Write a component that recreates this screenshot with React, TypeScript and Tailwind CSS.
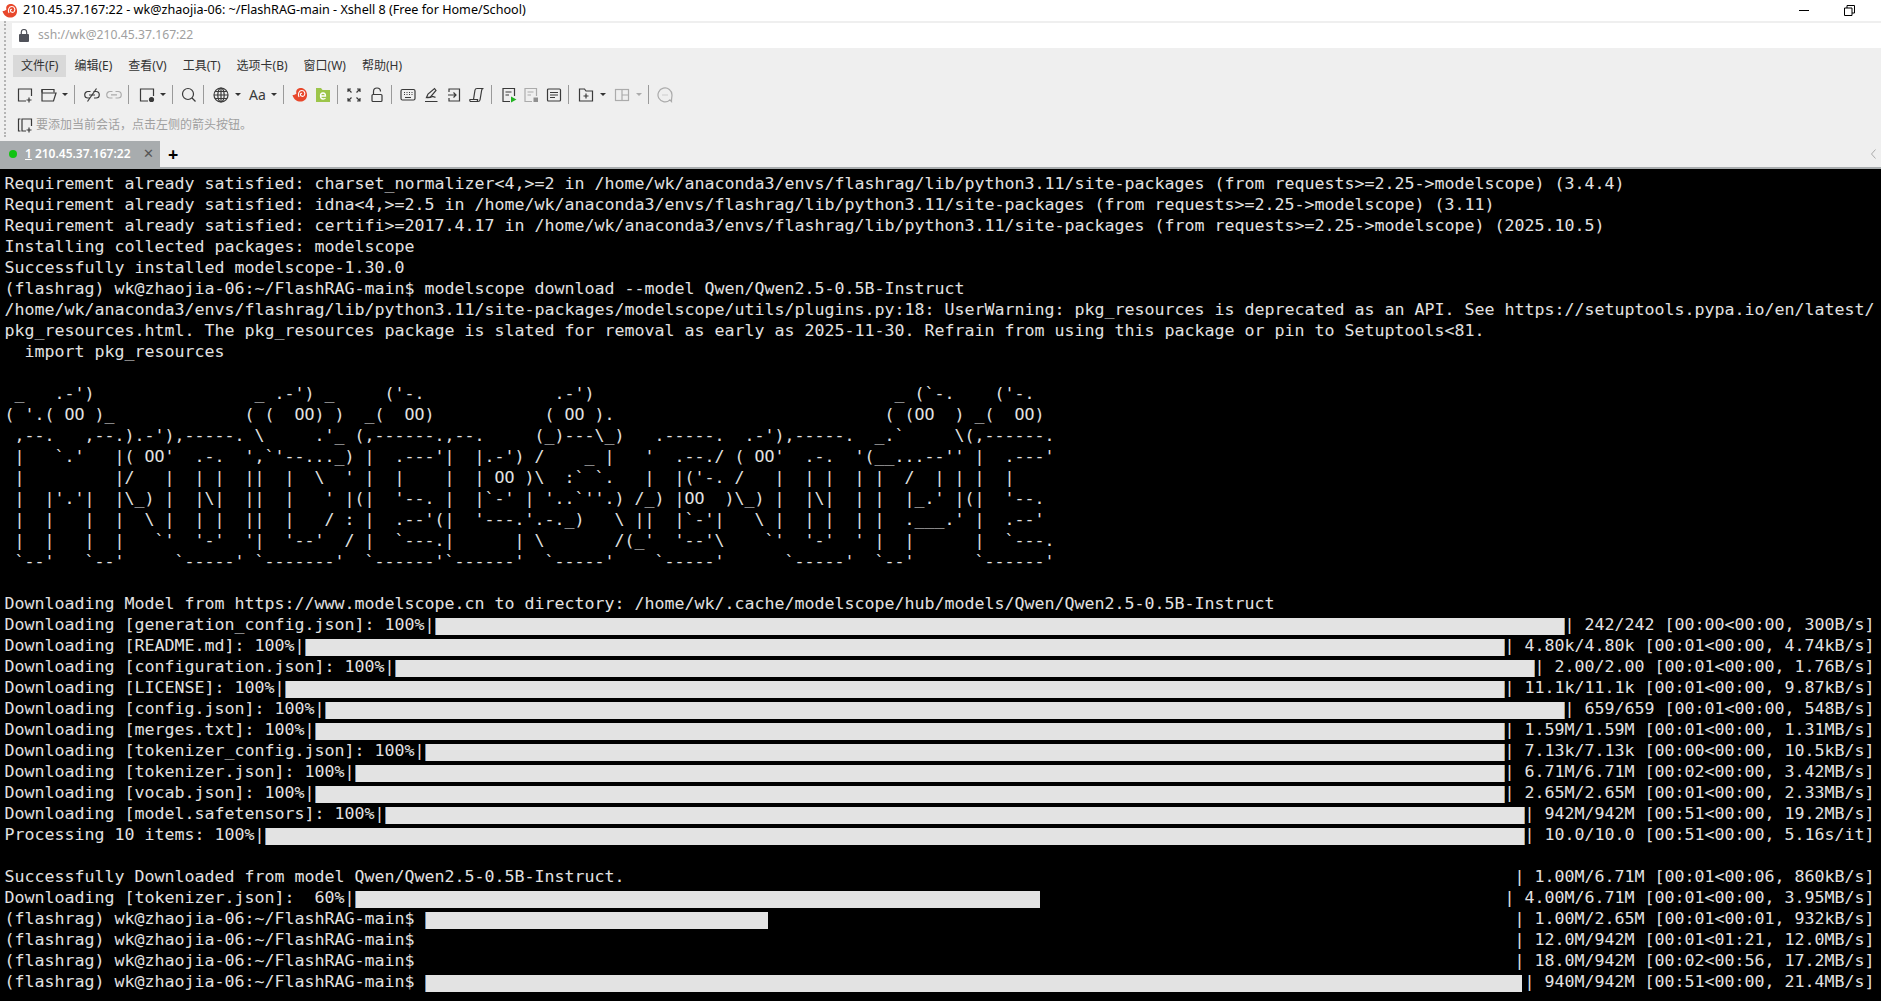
import type { ReactNode } from "react";

const TERMINAL_FONT = "font-['DejaVu_Sans_Mono',monospace]";
const UI_FONT = "font-['Noto_Sans','Noto_Sans_CJK_SC',sans-serif]";
const PROMPT = "(flashrag) wk@zhaojia-06:~/FlashRAG-main$ ";

const HEAD_LINES = [
  "Requirement already satisfied: charset_normalizer<4,>=2 in /home/wk/anaconda3/envs/flashrag/lib/python3.11/site-packages (from requests>=2.25->modelscope) (3.4.4)",
  "Requirement already satisfied: idna<4,>=2.5 in /home/wk/anaconda3/envs/flashrag/lib/python3.11/site-packages (from requests>=2.25->modelscope) (3.11)",
  "Requirement already satisfied: certifi>=2017.4.17 in /home/wk/anaconda3/envs/flashrag/lib/python3.11/site-packages (from requests>=2.25->modelscope) (2025.10.5)",
  "Installing collected packages: modelscope",
  "Successfully installed modelscope-1.30.0",
  PROMPT + "modelscope download --model Qwen/Qwen2.5-0.5B-Instruct",
  "/home/wk/anaconda3/envs/flashrag/lib/python3.11/site-packages/modelscope/utils/plugins.py:18: UserWarning: pkg_resources is deprecated as an API. See https://setuptools.pypa.io/en/latest/",
  "pkg_resources.html. The pkg_resources package is slated for removal as early as 2025-11-30. Refrain from using this package or pin to Setuptools<81.",
  "  import pkg_resources",
  "",
  " _   .-')                _ .-') _     ('-.             .-')                              _ (`-.    ('-.",
  "( '.( OO )_             ( (  OO) )  _(  OO)           ( OO ).                           ( (OO  ) _(  OO)",
  " ,--.   ,--.).-'),-----. \\     .'_ (,------.,--.     (_)---\\_)   .-----.  .-'),-----.  _.`     \\(,------.",
  " |   `.'   |( OO'  .-.  ',`'--..._) |  .---'|  |.-') /    _ |   '  .--./ ( OO'  .-.  '(__...--'' |  .---'",
  " |         |/   |  | |  ||  |  \\  ' |  |    |  | OO )\\  :` `.   |  |('-. /   |  | |  | |  /  | | |  |",
  " |  |'.'|  |\\_) |  |\\|  ||  |   ' |(|  '--. |  |`-' | '..`''.) /_) |OO  )\\_) |  |\\|  | |  |_.' |(|  '--.",
  " |  |   |  |  \\ |  | |  ||  |   / : |  .--'(|  '---.'.-._)   \\ ||  |`-'|   \\ |  | |  | |  .___.' |  .--'",
  " |  |   |  |   `'  '-'  '|  '--'  / |  `---.|      | \\       /(_'  '--'\\    `'  '-'  ' |  |      |  `---.",
  " `--'   `--'     `-----' `-------'  `------'`------'  `-----'    `-----'      `-----'  `--'      `------'",
  "",
  "Downloading Model from https://www.modelscope.cn to directory: /home/wk/.cache/modelscope/hub/models/Qwen/Qwen2.5-0.5B-Instruct",
];

// prefix, suffix, and the filled bar width in character cells (undefined = fills the whole gap)
const BAR_ROWS: { prefix: string; suffix: string; fill?: number }[] = [
  { prefix: "Downloading [generation_config.json]: 100%|", suffix: "| 242/242 [00:00<00:00, 300B/s]" },
  { prefix: "Downloading [README.md]: 100%|", suffix: "| 4.80k/4.80k [00:01<00:00, 4.74kB/s]" },
  { prefix: "Downloading [configuration.json]: 100%|", suffix: "| 2.00/2.00 [00:01<00:00, 1.76B/s]" },
  { prefix: "Downloading [LICENSE]: 100%|", suffix: "| 11.1k/11.1k [00:01<00:00, 9.87kB/s]" },
  { prefix: "Downloading [config.json]: 100%|", suffix: "| 659/659 [00:01<00:00, 548B/s]" },
  { prefix: "Downloading [merges.txt]: 100%|", suffix: "| 1.59M/1.59M [00:01<00:00, 1.31MB/s]" },
  { prefix: "Downloading [tokenizer_config.json]: 100%|", suffix: "| 7.13k/7.13k [00:00<00:00, 10.5kB/s]" },
  { prefix: "Downloading [tokenizer.json]: 100%|", suffix: "| 6.71M/6.71M [00:02<00:00, 3.42MB/s]" },
  { prefix: "Downloading [vocab.json]: 100%|", suffix: "| 2.65M/2.65M [00:01<00:00, 2.33MB/s]" },
  { prefix: "Downloading [model.safetensors]: 100%|", suffix: "| 942M/942M [00:51<00:00, 19.2MB/s]" },
  { prefix: "Processing 10 items: 100%|", suffix: "| 10.0/10.0 [00:51<00:00, 5.16s/it]" },
  { prefix: "", suffix: "", fill: 0 },
  { prefix: "Successfully Downloaded from model Qwen/Qwen2.5-0.5B-Instruct.", suffix: "| 1.00M/6.71M [00:01<00:06, 860kB/s]", fill: 0 },
  { prefix: "Downloading [tokenizer.json]:  60%|", suffix: "| 4.00M/6.71M [00:01<00:00, 3.95MB/s]", fill: 68.5 },
  { prefix: PROMPT, suffix: "| 1.00M/2.65M [00:01<00:01, 932kB/s]", fill: 34.3 },
  { prefix: PROMPT, suffix: "| 12.0M/942M [00:01<01:21, 12.0MB/s]", fill: 0 },
  { prefix: PROMPT, suffix: "| 18.0M/942M [00:02<00:56, 17.2MB/s]", fill: 0 },
  { prefix: PROMPT, suffix: "| 940M/942M [00:51<00:00, 21.4MB/s]", fill: 109.7 },
];

const MENUS = ["文件(F)", "编辑(E)", "查看(V)", "工具(T)", "选项卡(B)", "窗口(W)", "帮助(H)"];

function Ic({ className = "", muted = false, children }: { className?: string; muted?: boolean; children: ReactNode }) {
  return (
    <svg
      viewBox="0 0 16 16"
      fill="none"
      stroke={muted ? "#ababab" : "#3a3a3a"}
      strokeWidth="1.2"
      className={`w-4 h-4 shrink-0 ${className}`}
    >
      {children}
    </svg>
  );
}

function Sep({ className }: { className: string }) {
  return <div className={`w-px h-[19px] bg-[#9a9a9a] shrink-0 ${className}`} />;
}

function Caret({ className, muted = false }: { className: string; muted?: boolean }) {
  return (
    <div
      className={`w-0 h-0 shrink-0 border-x-[3px] border-x-transparent border-t-[3px] ${
        muted ? "border-t-[#ababab]" : "border-t-[#333333]"
      } ${className}`}
    />
  );
}

function SnailLogo({ className = "" }: { className?: string }) {
  return (
    <svg viewBox="0 0 16 16" className={`w-4 h-4 shrink-0 ${className}`} fill="none">
      <path d="M0.5 8C2 13.5 6 15 9.5 14.5C13.5 14 15.5 10.5 15 7C14.5 3 11.5 0.5 8 1C5 1.5 3.5 4 4.5 6.5C3 7.5 2 8 0.5 8Z" fill="#e8482c" />
      <path d="M7 10C5.5 7 7 3.5 9.8 3.5C12.5 3.5 13.5 6.4 12.4 8.2C11.2 10 8.6 9.6 8.4 7.6C8.3 6.6 9.2 6 10 6.5" stroke="#ffffff" strokeWidth="1.1" />
    </svg>
  );
}

function TerminalRow({ children }: { children?: ReactNode }) {
  return <div className="flex h-[21px] leading-[22px] whitespace-pre">{children}</div>;
}

function BarRow({ prefix, suffix, fill }: { prefix: string; suffix: string; fill?: number }) {
  const full = fill === undefined;
  return (
    <TerminalRow>
      <span className="shrink-0">{prefix}</span>
      <div className="flex-1 min-w-0 flex items-end">
        {full ? (
          <div className="w-full h-[17px] bg-[#e3e3e3] border-l border-l-[#5f8fc0] border-r border-r-[#c09a66]" />
        ) : fill ? (
          <div className="h-[17px] bg-[#e3e3e3] border-l border-l-[#5f8fc0]" style={{ width: fill * 10 }} />
        ) : null}
      </div>
      <span className="shrink-0">{suffix}</span>
    </TerminalRow>
  );
}

function Toolbar() {
  return (
    <div className="flex items-center h-[19px] mt-2">
      <Ic className="ml-[5px]">
        <path d="M9 14H1.5V2H14.5V9" />
        <path d="M12 10.5v5M9.5 13h5" />
      </Ic>
      <Ic className="ml-2">
        <path d="M1 5.5V2.5H13V5.5" />
        <path d="M1 2.5V14H12.5L15 6H1" />
      </Ic>
      <Caret className="ml-[5px]" />
      <Sep className="ml-[6px]" />
      <Ic className="ml-[9px]">
        <path d="M6.5 4.5H4a3 3 0 0 0 0 6.5h2M9.5 4.5H12a3 3 0 0 1 0 6.5h-2M5 8h6" />
        <path d="M3.5 14.5L12.5 1.5" />
      </Ic>
      <Ic muted className="ml-[6px]">
        <path d="M6.5 4.5H4a3.2 3.2 0 0 0 0 6.5h2.5M9.5 4.5H12a3.2 3.2 0 0 1 0 6.5H9.5M5 7.8h6" />
      </Ic>
      <Sep className="ml-[6px]" />
      <Ic className="ml-[10px]">
        <path d="M9 14H1.5V2H14.5V9" />
        <circle cx="12.5" cy="12.5" r="2" fill="#3a3a3a" />
      </Ic>
      <Caret className="ml-[5px]" />
      <Sep className="ml-[6px]" />
      <Ic className="ml-2">
        <circle cx="7" cy="7" r="5.5" />
        <path d="M11 11l3.5 3.5" />
      </Ic>
      <Sep className="ml-[6px]" />
      <Ic className="ml-[9px]">
        <circle cx="8" cy="8" r="7" />
        <ellipse cx="8" cy="8" rx="3.2" ry="7" />
        <path d="M1 8h14M2 4.5h12M2 11.5h12M8 1v14" />
      </Ic>
      <Caret className="ml-[6px]" />
      <span className="ml-2 w-4 shrink-0 text-[14px] leading-[19px] text-[#3a3a3a]">Aa</span>
      <Caret className="ml-[6px]" />
      <Sep className="ml-[6px]" />
      <SnailLogo className="ml-2" />
      <svg viewBox="0 0 16 16" className="w-4 h-4 shrink-0 ml-[7px]" fill="none">
        <path d="M1 1h5l1.5 2H15v12H1z" fill="#9cc54a" />
        <path d="M5.5 9h5C10.5 7 9.5 6 8 6S5.5 7.2 5.5 9s1 3 2.7 3c1 0 1.7-.3 2.3-.9" stroke="#ffffff" strokeWidth="1.3" />
      </svg>
      <Sep className="ml-[6px]" />
      <Ic className="ml-2">
        <path d="M2 5V2h3M14 5V2h-3M2 11v3h3M14 11v3h-3M2.5 2.5l3 3M13.5 2.5l-3 3M2.5 13.5l3-3M13.5 13.5l-3-3" />
      </Ic>
      <Ic className="ml-[7px]">
        <rect x="3" y="7.5" width="10" height="7" rx="1" />
        <path d="M4.5 7.5V4.5a3.5 3.5 0 0 1 7 0" />
      </Ic>
      <Sep className="ml-[6px]" />
      <Ic className="ml-2">
        <rect x="1" y="2.5" width="14" height="10.5" rx="1.5" />
        <path d="M4 5.5h1M6.5 5.5h1M9 5.5h1M11.5 5.5h1M4 7.5h1M6.5 7.5h1M9 7.5h1M11.5 7.5h1M5 10.5h6" />
      </Ic>
      <Ic className="ml-[7px]">
        <path d="M3.5 10.5L5 7l6.5-5.5 1.5 2L7.5 10z" />
        <path d="M3.5 10.5c2 .5 4 0 6-1l3 .8M2 14.5h12.5" />
      </Ic>
      <Ic className="ml-[7px]">
        <path d="M3 5V2h10.5v12H3v-3" />
        <path d="M2 8h8M7.5 5.5L10 8l-2.5 2.5" />
      </Ic>
      <Ic className="ml-[7px]">
        <path d="M4.5 12.5L6 3c.2-1 1-1.5 2-1.5h6.5c-1 0-1.6.7-1.8 1.5L11 13c-.2 1-1 1.5-2 1.5H2c-1 0-1.5-.8-1-2h7.5c-.3.8 0 1.8.8 2" />
      </Ic>
      <Sep className="ml-[6px]" />
      <svg viewBox="0 0 16 16" className="w-4 h-4 shrink-0 ml-[9px]" fill="none" stroke="#3a3a3a" strokeWidth="1.2">
        <path d="M9 14.5H2V1.5h11.5V9M4.5 5h6M4.5 8h3.5" />
        <path d="M10 9.5v6l5.5-3z" fill="#22b322" stroke="none" />
      </svg>
      <svg viewBox="0 0 16 16" className="w-4 h-4 shrink-0 ml-[6px]" fill="none" stroke="#ababab" strokeWidth="1.2">
        <path d="M9 14.5H2V1.5h11.5V9M4.5 5h6M4.5 8h3.5" />
        <rect x="10.5" y="10.5" width="4.5" height="4.5" fill="#8f8f8f" stroke="none" />
      </svg>
      <Ic className="ml-[7px]">
        <rect x="1.5" y="2" width="13" height="12" rx="1" />
        <path d="M4 5.5h8M4 8h8M4 10.5h5" />
      </Ic>
      <Sep className="ml-[6px]" />
      <Ic className="ml-[9px]">
        <path d="M1.5 14V2h5l1.5 2h6.5v10z" />
        <path d="M8 6.5v5M5.5 9h5" />
      </Ic>
      <Caret className="ml-[6px]" />
      <Ic muted className="ml-2">
        <rect x="1.5" y="2.5" width="13" height="11" />
        <path d="M8 2.5v11M8 8h6.5" />
      </Ic>
      <Caret muted className="ml-[6px]" />
      <Sep className="ml-[6px]" />
      <Ic muted className="ml-2">
        <path d="M14.5 14.5l-1.6-1.6A7 7 0 1 1 15 8c0 2-.6 3.5-.5 6.5z" />
        <path d="M5.5 8h1M7.5 8h1M9.5 8h1" />
      </Ic>
    </div>
  );
}

export default function App() {
  return (
    <div className={`w-[1881px] h-[1001px] overflow-hidden flex flex-col bg-black ${UI_FONT}`}>
      {/* Title bar */}
      <div className="h-[21px] bg-white flex items-center pl-[2px] shrink-0">
        <SnailLogo />
        <span className="ml-[5px] text-[12.6px] text-black whitespace-pre">
          210.45.37.167:22 - wk@zhaojia-06: ~/FlashRAG-main - Xshell 8 (Free for Home/School)
        </span>
        <div className="ml-auto flex items-center">
          <div className="w-[10px] h-px bg-black" />
          <svg viewBox="0 0 11 11" className="ml-[35px] mr-[26px] w-[11px] h-[11px]" fill="none" stroke="#000000">
            <path d="M.5 3h7.5v7.5H.5zM3 3V.5h7.5V8H8" />
          </svg>
        </div>
      </div>

      {/* Address, menu, toolbar and hint */}
      <div className="h-[120px] bg-[#efefef] flex shrink-0">
        <div className="w-3 pl-1 pb-1 shrink-0">
          <div className="h-full border-l-2 border-dotted border-[#b5b5b5]" />
        </div>
        <div className="flex-1 min-w-0 pt-[2px]">
          <div className="h-[25px] bg-white flex items-center pl-[7px] text-[12.2px] text-[#a0a0a0]">
            <svg viewBox="0 0 10 13" className="w-[10px] h-[13px]" fill="none">
              <rect y="5" width="10" height="8" rx="1" fill="#50525a" />
              <path d="M2.3 5.5V3.2a2.7 2.7 0 0 1 5.4 0v2.3" stroke="#50525a" strokeWidth="1.2" />
            </svg>
            <span className="ml-[9px]">ssh://wk@210.45.37.167:22</span>
          </div>
          <div className="flex h-[22px] mt-[7px] ml-px text-[12px] text-[#333333]">
            {MENUS.map((m, i) => (
              <div key={m} className={`px-2 flex items-center ${i === 0 ? "bg-[#d9d9d9]" : ""}`}>
                {m}
              </div>
            ))}
          </div>
          <Toolbar />
          <div className="flex items-center h-4 mt-[13px] ml-[5px] text-[12px] text-[#a0a0a0]">
            <Ic>
              <path d="M3.5 2H1.5V14H3.5M9 14H5V2H14.5V9" />
              <path d="M12 10.5v5M9.5 13h5" />
            </Ic>
            <span className="ml-[3px]">要添加当前会话，点击左侧的箭头按钮。</span>
          </div>
        </div>
      </div>

      {/* Tabs */}
      <div className="h-[26px] bg-[#efefef] flex items-center shrink-0">
        <div className="w-[160px] h-full bg-[#a8acae] flex items-center pl-[9px] text-[12px] font-semibold text-white">
          <span className="w-2 h-2 rounded-full bg-[#12c312]" />
          <span className="ml-2 underline">1</span>
          <span className="ml-[3px]">210.45.37.167:22</span>
          <span className="ml-3 text-[#555555] font-normal text-[13px]">✕</span>
        </div>
        <span className="ml-2 text-[18px] font-bold text-black leading-none">+</span>
        <svg viewBox="0 0 5 10" className="ml-auto mr-[5px] w-[5px] h-[10px]" fill="none" stroke="#aaaaaa">
          <path d="M4.5 .5L.5 5l4 4.5" />
        </svg>
      </div>
      <div className="h-[2px] bg-[#a8acae] shrink-0" />

      {/* Terminal */}
      <div className={`flex-1 min-h-0 pt-1 pl-[4.5px] w-[1874.5px] text-[16.61px] text-[#e2e2e2] ${TERMINAL_FONT}`}>
        {HEAD_LINES.map((line, i) => (
          <TerminalRow key={i}>{line}</TerminalRow>
        ))}
        {BAR_ROWS.map((row, i) => (
          <BarRow key={i} {...row} />
        ))}
      </div>
    </div>
  );
}
